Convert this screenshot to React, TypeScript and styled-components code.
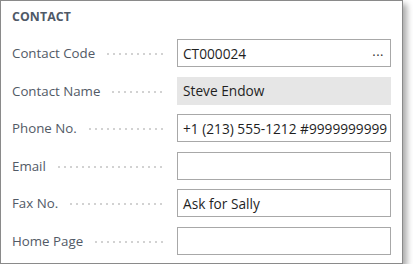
import styled, { createGlobalStyle } from "styled-components";

interface IField {
  label: string;
  value?: string;
  readOnly?: boolean;
  lookup?: boolean;
}

const fields: IField[] = [
  { label: "Contact Code", value: "CT000024", lookup: true },
  { label: "Contact Name", value: "Steve Endow", readOnly: true },
  { label: "Phone No.", value: "+1 (213) 555-1212 #9999999999" },
  { label: "Email" },
  { label: "Fax No.", value: "Ask for Sally" },
  { label: "Home Page" },
];

const GlobalStyle = createGlobalStyle`
  html, body {
    margin: 0;
    padding: 0;
    background: #ffffff;
  }
  body {
    font-family: "Open Sans", "Noto Sans", sans-serif;
  }
`;

const Panel = styled.section`
  box-sizing: border-box;
  width: 403px;
  height: 264px;
  padding: 8px 11px 0 11px;
  background: #ffffff;
  border: 1px solid #8a8a8a;
  box-shadow: 4px 4px 6px rgba(0, 0, 0, 0.33);
`;

const Heading = styled.h2`
  margin: 0 0 14px 0;
  font-size: 12.3px;
  line-height: 16px;
  font-weight: 700;
  letter-spacing: 0.1px;
  color: #4f5967;
`;

const Grid = styled.div`
  display: grid;
  grid-template-columns: 154px 214px;
  grid-auto-rows: 28px;
  column-gap: 11px;
  row-gap: 9.6px;
`;

const Label = styled.div`
  display: flex;
  align-items: center;
  font-size: 13.3px;
  color: #525a66;
  white-space: nowrap;
`;

const Leader = styled.span`
  flex: 1;
  height: 2px;
  margin: 2px 0 0 10px;
  background-image: radial-gradient(circle, #d2d2d2 0.9px, transparent 1.1px);
  background-size: 6px 2px;
  background-repeat: repeat-x;
`;

const Box = styled.div<{ $readOnly?: boolean }>`
  box-sizing: border-box;
  display: flex;
  align-items: center;
  padding: 0 6px 0 5px;
  font-size: 13.7px;
  color: #1f1f1f;
  white-space: nowrap;
  overflow: hidden;
  background: ${(p) => (p.$readOnly ? "#e6e6e6" : "#ffffff")};
  border: 1px solid ${(p) => (p.$readOnly ? "#e6e6e6" : "#a8a8a8")};
`;

const Value = styled.span`
  flex: 1;
`;

const Lookup = styled.span`
  font-size: 13px;
  color: #333333;
  letter-spacing: 0.5px;
  margin-top: -5px;
`;

function App() {
  return (
    <>
      <GlobalStyle />
      <Panel>
        <Heading>CONTACT</Heading>
        <Grid>
          {fields.map((f) => [
            <Label key={f.label + "-l"}>
              {f.label}
              <Leader />
            </Label>,
            <Box key={f.label + "-b"} $readOnly={f.readOnly}>
              <Value>{f.value}</Value>
              {f.lookup && <Lookup>...</Lookup>}
            </Box>,
          ])}
        </Grid>
      </Panel>
    </>
  );
}

export default App;
